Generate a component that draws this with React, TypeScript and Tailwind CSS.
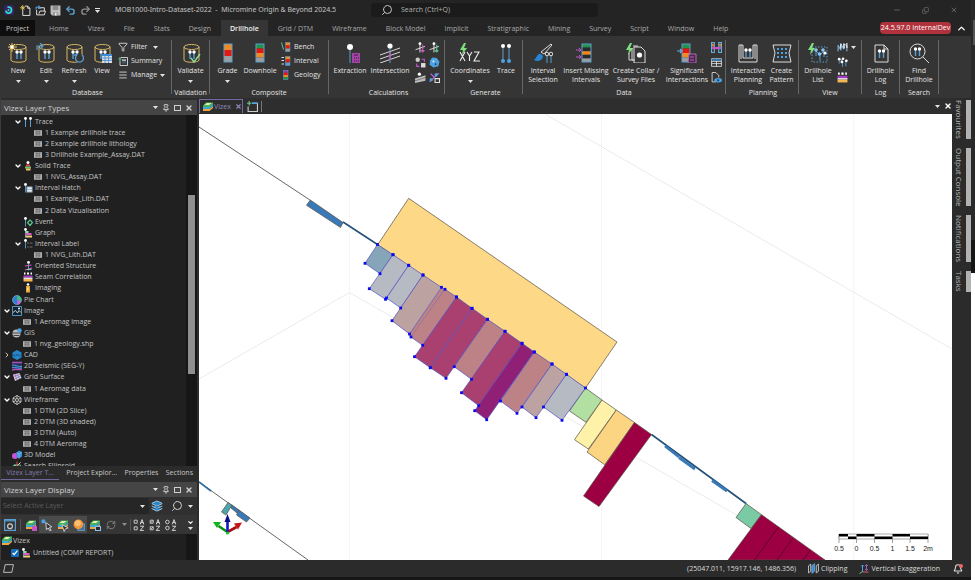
import type { ReactNode } from "react";
import { ChevronDown, ChevronRight, ChevronUp, Search, Pin, X, Minus, Copy, RefreshCw, Undo2, Redo2, Bell, Filter, Menu, Layers } from "lucide-react";

type Kids = { children?: ReactNode };

const Glyph = ({ children, cls = "h-5 w-5" }: Kids & { cls?: string }) => (
  <svg viewBox="0 0 20 20" className={"shrink-0 " + cls} fill="none" aria-hidden="true">
    {children}
  </svg>
);

const Arrow = () => (
  <svg viewBox="0 0 5 3" className="h-[3px] w-[5px] shrink-0" aria-hidden="true">
    <path d="M0 0h5L2.500 3z" fill="#e4e4e4" />
  </svg>
);

const Pins = ({ x = 0, y = 0 }: { x?: number; y?: number }) => (
  <g transform={`translate(${x} ${y})`}>
    <path d="M8 9v7M12 9v7" stroke="#5b9fd0" strokeWidth="1.400" />
    <circle cx="8" cy="9" r="1.700" fill="#fff" />
    <circle cx="12" cy="9" r="1.700" fill="#fff" />
  </g>
);

const Db = ({ children }: Kids) => (
  <Glyph>
    <ellipse cx="10.500" cy="4" rx="7.500" ry="2.500" stroke="#d9b865" />
    <path d="M3 4v13c0 3 15 3 15 0V4" stroke="#d9b865" />
    <Pins x={1} />
    {children}
  </Glyph>
);

const Bars = ({ colors, x = 6, w = 8 }: { colors: string[]; x?: number; w?: number }) => (
  <>
    {colors.map((c, i) => (
      <rect key={i} x={x} y={1 + (i * 18) / colors.length} width={w} height={18 / colors.length} fill={c} />
    ))}
    <rect x={x} y="1" width={w} height="18" stroke="#5b9fd0" />
  </>
);

function Big({ icon, lines, w, drop }: { icon: ReactNode; lines: string[]; w: string; drop?: boolean }) {
  return (
    <button className={"flex shrink-0 flex-col items-center pt-[3px] " + w}>
      {icon}
      <span className="mt-[3px] flex flex-col items-center leading-[9px]">
        {lines.map((l) => (
          <span key={l}>{l}</span>
        ))}
      </span>
      {drop && (
        <span className="mt-[5px]">
          <Arrow />
        </span>
      )}
    </button>
  );
}

function Small({ icon, label, drop }: { icon: ReactNode; label?: string; drop?: boolean }) {
  return (
    <button className="flex h-[14px] items-center gap-[3px]">
      {icon}
      {label && <span>{label}</span>}
      {drop && <Arrow />}
    </button>
  );
}

function Group({ name, w, children }: Kids & { name: string; w: string }) {
  return (
    <section aria-label={name} className={"flex shrink-0 flex-col py-1 " + w}>
      <div className="flex h-[54px] flex-col border-r border-[#666]">
        <div className="flex h-[48px] shrink-0 items-start">{children}</div>
        <h2 className="shrink-0 text-center leading-[10px]">{name}</h2>
      </div>
    </section>
  );
}

const sm = "h-[11px] w-[11px]";

const Well = ({ color }: { color: string }) => (
  <Glyph cls={sm}>
    <path d="M9 5v14M1 14l17-6" stroke="#dcdcdc" strokeWidth="1.800" />
    <circle cx="9" cy="3" r="2.600" fill="#fff" />
    <path d="M14 5v12M11 15l3 3 3-3" stroke={color} strokeWidth="2" />
  </Glyph>
);

const TABS = ["Home", "Vizex", "File", "Stats", "Design", "Drillhole", "Grid / DTM", "Wireframe", "Block Model", "Implicit", "Stratigraphic", "Mining", "Survey", "Script", "Window", "Help"];

function TitleBar() {
  return (
    <header className="flex h-5 shrink-0 items-center bg-[#242424] pl-1 text-[#c4c4c4]">
      <Glyph cls="h-[10px] w-[10px]">
        <rect width="20" height="20" rx="3" fill="#352064" />
        <path d="M7 4h2a6 6 0 010 12c-4 0-5-2-5-5" stroke="#30dbc9" strokeWidth="3.500" />
        <circle cx="9" cy="10" r="2" fill="#30dbc9" />
      </Glyph>
      <div className="ml-[6px] flex items-center gap-1">
        <button aria-label="New file">
          <Glyph cls="h-[11px] w-[11px]">
            <path d="M5 8v11h13V6l-4-4H9M14 2v4h4" stroke="#ddd" strokeWidth="1.800" />
            <path d="M5 0v9M0 5h9M2 2l6 6M8 2L2 8" stroke="#efc85a" strokeWidth="1.500" />
          </Glyph>
        </button>
        <button aria-label="Open">
          <Glyph cls="h-[11px] w-[11px]">
            <path d="M3 9v9h14l2-7H9l-2 5M9 7V5h8v6" stroke="#ddd" strokeWidth="1.800" />
            <path d="M2 8V4h7M6 1l3 3-3 3" stroke="#5b9fd0" strokeWidth="2" />
          </Glyph>
        </button>
        <button aria-label="Save">
          <Glyph cls="h-[11px] w-[11px]">
            <path d="M1 1h18v18H4l-3-3z" fill="#bcbcbc" />
            <path d="M5 2h10v7H5zM6 13h8v6H6z" fill="#8a8a8a" />
            <path d="M9 14h3v5H9z" fill="#eee" />
          </Glyph>
        </button>
        <button aria-label="Undo"><Undo2 className="h-[11px] w-[11px] text-[#5b9fd0]" strokeWidth={3} /></button>
        <button aria-label="Redo"><Redo2 className="h-[11px] w-[11px] text-[#8d8d8d]" strokeWidth={3} /></button>
        <button aria-label="Customize" className="flex flex-col items-center gap-px"><span className="h-px w-[5px] bg-[#e4e4e4]" /><Arrow /></button>
      </div>
      <span className="ml-[15px] w-[256px] font-['Noto_Sans'] whitespace-nowrap">MOB1000-Intro-Dataset-2022&nbsp; -&nbsp; Micromine Origin &amp; Beyond 2024.5</span>
      <label className="flex h-[14px] w-[227px] items-center gap-2 rounded-sm bg-[#1b1b1b] pl-[10px]">
        <Search className="h-3 w-3 -scale-x-100" strokeWidth={2} />
        <input aria-label="Search" placeholder="Search (Ctrl+Q)" className="w-40 bg-transparent outline-none placeholder:text-[#b4b4b4]" />
      </label>
      <div className="ml-auto flex items-center gap-[21px] pr-[13px] text-[#606060]">
        <button aria-label="Minimize"><Minus className="h-2 w-2" strokeWidth={3} /></button>
        <button aria-label="Restore"><Copy className="h-[7px] w-[7px] -scale-y-100" strokeWidth={3} /></button>
        <button aria-label="Close"><X className="h-2 w-2" strokeWidth={3} /></button>
      </div>
    </header>
  );
}

function TabBar() {
  return (
    <nav className="flex h-4 shrink-0 items-stretch bg-[#242424] text-[#a9a9a9]">
      <button className="mr-1 w-[35px] bg-[#0e0e0e] pt-px text-[#c8c8c8]">Project</button>
      {TABS.map((t) => (
        <button key={t} className={"ml-px px-[9px] pt-px " + (t === "Drillhole" ? "bg-[#353535] font-semibold text-[#f0f0f0]" : "")}>
          {t}
        </button>
      ))}
      <div className="ml-auto flex items-center gap-[5px] pr-1">
        <span className="flex h-3 w-[71px] items-center justify-center rounded-sm bg-[#b0323c] text-white">24.5.97.0 InternalDev</span>
        <button aria-label="Collapse ribbon"><ChevronUp className="h-[11px] w-[11px] text-white" strokeWidth={3} /></button>
      </div>
    </nav>
  );
}

const Bolt = () => <path d="M4 0L0 7h3l-1 5 5-7H4l2-5z" fill="#7de07d" />;

function Ribbon() {
  return (
    <div className="flex h-[62px] shrink-0 overflow-hidden bg-[#353535] text-[#e4e4e4]">
      <Group name="Database" w="w-[172px] pl-1">
        <Big w="w-7" drop lines={["New"]} icon={<Db><path d="M4 0v9M0 4h9M1 1l6 6M7 1L1 7" stroke="#efc85a" /><circle cx="4" cy="4" r="1.800" fill="#fff" /></Db>} />
        <Big w="w-7" drop lines={["Edit"]} icon={<Db><path d="M1 7V3h6M4 0l3 3-3 3" stroke="#5b9fd0" strokeWidth="1.200" /></Db>} />
        <Big w="w-7" drop lines={["Refresh"]} icon={<Db><circle cx="15.500" cy="15.500" r="4.500" fill="#353535" /><path d="M13 12a4 4 0 105 0M13 12v-2M13 12h-3" stroke="#5b9fd0" strokeWidth="1.300" /></Db>} />
        <Big w="w-7" lines={["View"]} icon={<Db><path d="M10 11h10v9H10z" fill="#dcdcdc" /><path d="M10 11h10v2H10z" fill="#3b8bd6" /><path d="M10 15h10M10 17.500h10M13 13v7M16.500 13v7" stroke="#3b8bd6" strokeWidth=".8" /></Db>} />
        <div className="ml-[2px] flex flex-col">
          <div className="flex items-center gap-[6px]"><Small icon={<Filter className="h-[10px] w-[10px]" strokeWidth={2} />} label="Filter" /><Arrow /></div>
          <Small label="Summary" icon={<Glyph cls="h-[10px] w-[10px]"><path d="M6 3h13v16H4V9" stroke="#ddd" strokeWidth="1.800" /><path d="M1 6h6M4 2v7" stroke="#5fc98d" strokeWidth="2" /><Pins x={2} y={-1} /></Glyph>} />
          <Small label="Manage" drop icon={<Menu className="h-[10px] w-[10px]" strokeWidth={2} />} />
        </div>
      </Group>
      <Group name="Validation" w="w-[38px]">
        <Big w="w-full" drop lines={["Validate"]} icon={<Db><path d="M10 15l3 4 6-8" stroke="#8be29b" strokeWidth="1.400" /></Db>} />
      </Group>
      <Group name="Composite" w="w-[119px]">
        <div className="flex pl-1">
          <Big w="w-[27px]" drop lines={["Grade"]} icon={<Glyph><Bars colors={["#f08a24", "#e01a12", "#9d9d9d"]} /></Glyph>} />
          <Big w="w-[38px]" lines={["Downhole"]} icon={<Glyph><Bars colors={["#23924b", "#e01a12", "#f08a24", "#9d9d9d"]} /></Glyph>} />
          <div className="ml-[2px]">
            <Small label="Bench" icon={<Glyph cls="h-[10px] w-[10px]"><path d="M1 1l4 14" stroke="#5fc98d" strokeWidth="2" /><Bars x={9} w={9} colors={["#f08a24", "#e01a12", "#9d9d9d"]} /></Glyph>} />
            <Small label="Interval" icon={<Glyph cls="h-[10px] w-[10px]"><path d="M1 3h5M1 9h5M1 16h5" stroke="#ddd" strokeWidth="2" /><Bars x={9} w={9} colors={["#f08a24", "#e01a12", "#5b9fd0"]} /></Glyph>} />
            <Small label="Geology" icon={<Glyph cls="h-[10px] w-[10px]"><Bars x={5} w={9} colors={["#9c38ad", "#e01a12", "#f08a24", "#23924b"]} /></Glyph>} />
          </div>
        </div>
      </Group>
      <Group name="Calculations" w="w-[116px] pl-1">
        <Big w="w-[34px]" lines={["Extraction"]} icon={<Glyph><path d="M10 5v15" stroke="#5b9fd0" /><circle cx="10" cy="4" r="3" fill="#fff" /><path d="M12 10h8v10h-8z" fill="#a444a4" /><path d="M14 12h4M14 15h1m1 0h1m1 0h1M14 18h1m1 0h1m1 0h1" stroke="#351e35" /></Glyph>} />
        <Big w="w-[46px]" lines={["Intersection"]} icon={<Glyph><path d="M0 12l20-7M0 16l20-7M0 20l20-7" stroke="#d8d8d8" /><path d="M10 5v15" stroke="#5b9fd0" /><path d="M10 9v8" stroke="#c454c8" strokeWidth="1.300" /><circle cx="10" cy="3" r="2.600" fill="#fff" /></Glyph>} />
        <div className="ml-[2px] grid grid-cols-2 gap-x-[3px] gap-y-px">
          <Small icon={<Well color="#d458c8" />} />
          <Small icon={<Well color="#5fc98d" />} />
          <Small icon={<Glyph cls={sm}><circle cx="5" cy="5" r="4" fill="#ccc" /><path d="M11 11h8v8h-8z" fill="#ddd" /><path d="M12 4h5v5M8 17H3v-5" stroke="#c454c8" strokeWidth="2" /></Glyph>} />
          <Small icon={<Glyph cls={sm}><path d="M6 1l8 1 5 6-2 9-9 2-7-5 1-8z" fill="#4da2df" /><circle cx="8" cy="8" r="2" fill="#b7e1ff" /><circle cx="12" cy="13" r="1.500" fill="#225" /></Glyph>} />
          <Small icon={<Glyph cls={sm}><path d="M0 12l19-6v10L0 20z" fill="#bbb" /><path d="M0 16l19-6" stroke="#444" /><circle cx="8" cy="4" r="3" fill="#fff" /></Glyph>} />
          <Small icon={<Glyph cls={sm}><path d="M1 18L18 2M3 3l7 7" stroke="#bd6de0" strokeWidth="2" /><circle cx="4" cy="14" r="3" fill="#4da2df" /><circle cx="13" cy="5" r="3" fill="#4da2df" /><path d="M11 12h8v7h-8z" stroke="#ddd" strokeWidth="2" /></Glyph>} />
        </div>
      </Group>
      <Group name="Generate" w="w-[78px] pl-1">
        <Big w="w-[42px]" drop lines={["Coordinates"]} icon={<Glyph cls="h-5 w-6"><Bolt /><path d="M0 9l5 9M5 9l-5 9M7 9l2.500 4v5M12 9l-2.500 4M14 9h5l-5 9h6" stroke="#eee" strokeWidth="1.100" /></Glyph>} />
        <Big w="w-[30px]" lines={["Trace"]} icon={<Glyph><path d="M7 4v14M13 4v14" stroke="#5b9fd0" /><circle cx="7" cy="3" r="2" fill="#fff" /><circle cx="13" cy="3" r="2" fill="#fff" /><circle cx="7" cy="18" r="2" fill="#4da2df" /><circle cx="13" cy="18" r="2" fill="#4da2df" /></Glyph>} />
      </Group>
      <Group name="Data" w="w-[203px]">
        <Big w="w-10" lines={["Interval", "Selection"]} icon={<Glyph><path d="M19 2l-8 9-3-2 10-8z" stroke="#ddd" /><path d="M8 11c-4-1-4 4-7 6 3 2 9 1 9-4z" fill="#2784d2" /><path d="M14 12v8M18 12v8" stroke="#5b9fd0" /><circle cx="14" cy="11" r="1.800" stroke="#ddd" /><circle cx="18" cy="11" r="1.800" stroke="#ddd" /></Glyph>} />
        <Big w="w-[46px]" lines={["Insert Missing", "Intervals"]} icon={<Glyph><Bars x={6} w={9} colors={["#23924b", "#2b2b2b", "#f08a24", "#2b2b2b", "#9d9d9d"]} /><path d="M0 7h5M3 5l2 2-2 2M0 14h5M3 12l2 2-2 2" stroke="#c454c8" /></Glyph>} />
        <Big w="w-[54px]" lines={["Create Collar /", "Survey Files"]} icon={<Glyph><Bolt /><path d="M3 10v7h4M7 3h5M6 5v12h3" stroke="#ddd" /><path d="M8 4h7l4 4v12H8z" stroke="#ddd" /><circle cx="13.500" cy="12" r="2.600" fill="#fff" /></Glyph>} />
        <Big w="w-12" lines={["Significant", "Intersections"]} icon={<Glyph><Bars x={5} w={8} colors={["#23924b", "#e01a12", "#f08a24", "#9d9d9d"]} /><path d="M0 8h5M3 6l2 2-2 2" stroke="#66b0e0" strokeWidth="1.200" /><path d="M12 11h7v9h-8z" fill="#4a284b" stroke="#b468b7" /><path d="M13 14h4M13 17h4" stroke="#b468b7" /></Glyph>} />
        <div className="flex flex-col gap-px">
          <Small icon={<Glyph cls={sm}><path d="M1 1h5v18H1zM14 1h5v18h-5z" stroke="#66b0e0" strokeWidth="2" /><path d="M2 3h3v5H2zM15 3h3v5h-3z" fill="#f08a24" /><path d="M2 9h16v4H2z" fill="#c454c8" /></Glyph>} />
          <Small icon={<Glyph cls={sm}><path d="M1 3h18v14H1zM1 8h18M1 12h18M10 3v14" stroke="#ddd" strokeWidth="1.600" /><path d="M1 3h18v4H1z" fill="#3976a8" /></Glyph>} />
          <Small icon={<Glyph cls={sm}><path d="M9 18H2V1h7l5 5v4" stroke="#ddd" strokeWidth="1.600" /><ellipse cx="13" cy="15" rx="7" ry="4" fill="#4da2df" /><circle cx="13" cy="15" r="2" fill="#183b66" /></Glyph>} />
        </div>
      </Group>
      <Group name="Planning" w="w-[73px] pl-[2px]">
        <Big w="w-10" lines={["Interactive", "Planning"]} icon={<Glyph><path d="M1 2h4v13h10V2h4v17H1zM3 2v14M17 2v14" stroke="#ddd" /><Pins y={-2} /></Glyph>} />
        <Big w="w-[27px]" lines={["Create", "Pattern"]} icon={<Glyph><path d="M1 2h18l-2 8 2 9H1l2-9z" stroke="#ddd" /><path d="M5 6h2m2 0h2m2 0h2M5 10h2m2 0h2m2 0h2M5 14h2m2 0h2m2 0h2" stroke="#4da2df" strokeWidth="2" /></Glyph>} />
      </Group>
      <Group name="View" w="w-[63px]">
        <Big w="w-[38px]" lines={["Drillhole", "List"]} icon={<Glyph><path d="M4 4h15v15H4z" stroke="#5b9fd0" strokeDasharray="1.500 1.500" /><Bolt /><path d="M8 8l4 4 4-4M12 12v6M8 9v4M16 9v5" stroke="#4da2df" /><circle cx="8" cy="7" r="1.800" fill="#8cc5ee" /><circle cx="15" cy="7" r="1.800" fill="#8cc5ee" /><circle cx="11.500" cy="11" r="1.800" fill="#8cc5ee" /><circle cx="17" cy="10" r="1.600" fill="#fff" /></Glyph>} />
        <div className="flex flex-col gap-px">
          <Small drop icon={<Glyph cls={sm}><path d="M2 17V6l5 9V3l5 10V3l6 4v10" stroke="#8cc5ee" strokeWidth="1.800" /><path d="M7 3v9M13 3v9M18 2v9" stroke="#fff" strokeWidth="2" /></Glyph>} />
          <Small icon={<Glyph cls={sm}><path d="M4 4v8M10 9v9M16 8v9M8 4v5" stroke="#5b9fd0" strokeWidth="1.600" /><circle cx="4" cy="4" r="2.500" fill="#fff" /><circle cx="9" cy="9" r="2.500" fill="#fff" /><circle cx="11" cy="3" r="2.300" fill="#fff" /><circle cx="17" cy="7" r="2.500" fill="#fff" /></Glyph>} />
          <Small icon={<SeamIcon />} />
        </div>
      </Group>
      <Group name="Log" w="w-[38px]">
        <Big w="w-full" lines={["Drillhole", "Log"]} icon={<Glyph><path d="M4 2h9l4 4v13H4z M13 2v4h4" stroke="#ddd" /><Pins x={0.5} y={-1} /></Glyph>} />
      </Group>
      <Group name="Search" w="w-[39px]">
        <Big w="w-full" lines={["Find", "Drillhole"]} icon={<Glyph><circle cx="8.500" cy="8.500" r="7.500" stroke="#ddd" /><path d="M14 14l6 6" stroke="#ddd" /><Pins x={-1.5} y={-3} /></Glyph>} />
      </Group>
    </div>
  );
}

const SeamIcon = ({ cls = "h-[11px] w-[11px]" }: { cls?: string }) => (
  <Glyph cls={cls}>
    <path d="M2 3h3m3 0h4m3 0h3" stroke="#fff" strokeWidth="4" />
    <path d="M1 7h18v4H1z" fill="#a23cc0" />
    <path d="M1 11h18v3H1z" fill="#ead9ef" />
    <path d="M1 14h18v5H1z" fill="#f2b84f" />
  </Glyph>
);

const VizexIcon = () => (
  <Glyph cls="h-[10px] w-[10px]">
    <path d="M0 14v4h13l7-6V8l-7 6z" fill="#f2a53b" />
    <path d="M0 10v4h13l7-6V4l-7 6z" fill="#3aa7d7" />
    <path d="M0 7l6-6h14v3l-7 6H0z" fill="#49b35d" />
    <path d="M3 6l5-4h9l-5 4z" fill="#dff0b0" />
  </Glyph>
);

function TreeIcon({ kind }: { kind: string }) {
  const stem = <><path d="M5 4v15" stroke="#5b9fd0" strokeWidth="1.800" /><circle cx="5" cy="3" r="2.800" fill="#fff" /></>;
  const art: Record<string, ReactNode> = {
    file: <><path d="M0 3h20v14H0z" fill="#b0b0b0" /><path d="M3 7h14M3 12h14M6 4v11M14 4v11M10 5v9" stroke="#606060" strokeWidth="1.400" /></>,
    trace: <><path d="M5 3v17M15 3v17" stroke="#5b9fd0" strokeWidth="2" /><circle cx="5" cy="3" r="2.800" fill="#fff" /><circle cx="15" cy="3" r="2.800" fill="#fff" /></>,
    solid: <><circle cx="10" cy="3" r="3" fill="#fff" /><path d="M6 7h8v4H6z" fill="#e24a4a" /><path d="M4 11h12v4H4z" fill="#6bbf73" /><path d="M6 15h9v4H6z" fill="#f2c063" /></>,
    hatch: <>{stem}<path d="M7 7h12v12H7z" fill="#9fb9c9" /><path d="M9 9h8v3H9zM9 14h8v3H9z" fill="#e8eef2" /></>,
    event: <>{stem}<path d="M14 6l5 5-5 6-5-6z" stroke="#5fc98d" strokeWidth="2.400" /></>,
    graph: <>{stem}<path d="M5 6h6v4H5z" fill="#8adf9c" /><path d="M5 10h12v4H5z" fill="#d85cc6" /><path d="M5 15h13v4H5z" fill="#f2d078" /></>,
    label: <>{stem}<path d="M8 8h4m2 0h5M8 16h3m2 0h6" stroke="#888" strokeWidth="1.500" /></>,
    orient: <><circle cx="11" cy="3" r="2.800" fill="#fff" /><path d="M11 5v14" stroke="#5b9fd0" strokeWidth="2" /><path d="M4 10l13-2M4 18l14-4" stroke="#c85cc8" strokeWidth="2.500" /><path d="M8 17h9" stroke="#6bd08a" strokeWidth="2" /></>,
    imaging: <><circle cx="10" cy="3" r="2.600" fill="#fff" /><path d="M6 6h8v13H6z" fill="#e9a338" /><path d="M8 9h3v6H8z" fill="#ffe3a2" /></>,
    pie: <><circle cx="10" cy="10" r="9" fill="#2c7fd0" stroke="#9ed0f5" /><path d="M10 10V1a9 9 0 018 12z" fill="#49b878" /><path d="M10 10l8 3a9 9 0 01-7 6z" fill="#d95bd0" /></>,
    image: <><path d="M1 1h18v18H1z" fill="#12232f" stroke="#5b9fd0" strokeWidth="1.800" /><path d="M2 13l5-4 4 5 3-5 4 4" stroke="#eee" strokeWidth="1.600" /><circle cx="14" cy="5" r="2" fill="#fff" /></>,
    gis: <><circle cx="9" cy="11" r="8" fill="#bdbdbd" /><path d="M1 10h16M3 15h12" stroke="#444" strokeWidth="2" /><circle cx="15" cy="5" r="4.500" fill="#4da2df" /></>,
    cad: <><path d="M10 0l9 5v10l-9 5-9-5V5z" fill="#2586c9" /><path d="M4 8v4h3M8 12l2-4 2 4M14 8v4h3" stroke="#12507e" strokeWidth="1.500" /></>,
    seismic: <><path d="M0 1h20v18H0z" fill="#27335e" /><path d="M0 3h20M0 18c8-3 12 0 20-1" stroke="#b04bb5" strokeWidth="3" /><path d="M0 8c8 0 12 4 20 3M0 13c7-2 12 3 20 1" stroke="#4da2df" strokeWidth="2" /></>,
    grid: <><path d="M2 5l13-3 4 10-13 6z" fill="#d7d4e8" /><path d="M6 4l4 13M10 3l5 11M2 9l14-4M5 14l13-6" stroke="#7a63a8" strokeWidth="1.200" /><circle cx="7" cy="8" r="1.500" fill="#df548d" /><circle cx="13" cy="10" r="1.500" fill="#4da2df" /></>,
    wire: <><path d="M10 1l8 5v8l-8 5-8-5V6zM10 1v18M2 6l16 8M18 6L2 14" stroke="#ddd" strokeWidth="1.600" /><circle cx="10" cy="10" r="3" fill="#222" stroke="#ddd" strokeWidth="1.500" /></>,
    model: <><circle cx="6" cy="12" r="6" fill="#c755d8" /><path d="M9 5l5-4 6 3v9l-6 4-5-3z" fill="#3991d8" /><path d="M9 5l5 3 6-4M14 8v9" stroke="#a9d5f5" /></>,
    ellip: <><path d="M3 17L17 3M4 8l12 6" stroke="#e6e6e6" strokeWidth="2" /><ellipse cx="10" cy="11" rx="9" ry="3.500" stroke="#5fc98d" strokeWidth="2" /><path d="M10 10V1" stroke="#e24a4a" strokeWidth="2" /></>,
  };
  if (kind === "seam") return <SeamIcon cls="h-[10px] w-[10px]" />;
  return <Glyph cls={kind === "file" ? "mr-px h-2 w-2" : "h-[10px] w-[10px]"}>{art[kind]}</Glyph>;
}

const TREE: [string, string, number, string?][] = [
  ["trace", "Trace", 1, "v"], ["file", "1 Example drillhole trace", 2], ["file", "2 Example drillhole lithology", 2], ["file", "3 Drillhole Example_Assay.DAT", 2],
  ["solid", "Solid Trace", 1, "v"], ["file", "1 NVG_Assay.DAT", 2], ["hatch", "Interval Hatch", 1, "v"], ["file", "1 Example_Lith.DAT", 2], ["file", "2 Data Vizualisation", 2],
  ["event", "Event", 1], ["graph", "Graph", 1], ["label", "Interval Label", 1, "v"], ["file", "1 NVG_Lith.DAT", 2], ["orient", "Oriented Structure", 1], ["seam", "Seam Correlation", 1], ["imaging", "Imaging", 1],
  ["pie", "Pie Chart", 0], ["image", "Image", 0, "v"], ["file", "1 Aeromag image", 1], ["gis", "GIS", 0, "v"], ["file", "1 nvg_geology.shp", 1], ["cad", "CAD", 0, ">"], ["seismic", "2D Seismic (SEG-Y)", 0],
  ["grid", "Grid Surface", 0, "v"], ["file", "1 Aeromag data", 1], ["wire", "Wireframe", 0, "v"], ["file", "1 DTM (2D Slice)", 1], ["file", "2 DTM (3D shaded)", 1], ["file", "3 DTM (Auto)", 1], ["file", "4 DTM Aeromag", 1],
  ["model", "3D Model", 0], ["ellip", "Search Ellipsoid", 0],
];
const INDENT = ["pl-[2px]", "pl-[13px]", "pl-[24px]"];

function PanelHead({ title }: { title: string }) {
  return (
    <div className="flex h-[15px] shrink-0 items-center bg-[#454545] pl-[3px] text-[#d0d0d0]">
      <h2 className="text-[8px]">{title}</h2>
      <div className="ml-auto flex items-center gap-1 pr-1">
        <button aria-label="Panel menu"><Arrow /></button>
        <button aria-label="Pin"><Pin className="h-2 w-2" strokeWidth={3} /></button>
        <button aria-label="Maximize" className="h-[6px] w-[7px] border border-[#d0d0d0]" />
        <button aria-label="Close panel"><X className="h-2 w-2" strokeWidth={4} /></button>
      </div>
    </div>
  );
}

function Tool({ label, on, children }: Kids & { label: string; on?: boolean }) {
  return (
    <button aria-label={label} className={"flex h-full w-4 items-center justify-center " + (on ? "bg-[#4b4b4b]" : "")}>
      {children}
    </button>
  );
}

const SortIcon = ({ kind }: { kind: number }) => (
  <Glyph cls="h-3 w-3">
    {kind < 2 ? <path d="M2 2h5v5H2zM2 13h5v5H2z" stroke="#ccc" strokeWidth="1.600" /> : <><circle cx="4" cy="5" r="3" stroke="#ccc" strokeWidth="1.600" /><circle cx="4" cy="15" r="3" stroke="#ccc" strokeWidth="1.600" /></>}
    {kind === 1 && <path d="M2 7l5-5M2 18l5-5" stroke="#ccc" strokeWidth="1.500" />}
    <path d="M12 9l3-8 3 8M13 6h4M12 12h6l-6 7h6" stroke="#ddd" strokeWidth="1.600" />
  </Glyph>
);

function LeftPanel() {
  return (
    <aside className="flex w-[197px] shrink-0 flex-col overflow-hidden border-l border-[#3c3c3c] bg-[#2c2c2c]">
      <div className="h-[2px] shrink-0" />
      <PanelHead title="Vizex Layer Types" />
      <div className="flex min-h-0 flex-1 overflow-hidden bg-[#202020]">
        <ul className="mt-px grid h-[356px] flex-1 auto-rows-fr text-[#c4c4c4]">
          {TREE.map(([kind, text, depth, state]) => (
            <li key={text} className={"flex min-h-0 items-center gap-[2px] whitespace-nowrap " + INDENT[depth]}>
              <span className="flex w-[7px] shrink-0 justify-center">
                {state === "v" && <ChevronDown className="h-2 w-2 shrink-0 text-white" strokeWidth={4} />}
                {state === ">" && <ChevronRight className="h-2 w-2 shrink-0" strokeWidth={3} />}
              </span>
              <TreeIcon kind={kind} />
              <span>{text}</span>
            </li>
          ))}
        </ul>
        <div className="w-[11px] shrink-0 bg-[#161616] px-[2px] pt-20">
          <div className="h-[179px] bg-[#8f8f8f]" />
        </div>
      </div>
      <div className="flex h-[14px] shrink-0 justify-between bg-[#2b2b2b] pr-1 text-[#c6c6c6]">
        <button className="w-[58px] border-b border-[#70689a] text-[#8279aa]">Vizex Layer T...</button>
        <button>Project Explor...</button>
        <button>Properties</button>
        <button>Sections</button>
      </div>
      <div className="h-[2px] shrink-0" />
      <PanelHead title="Vizex Layer Display" />
      <div className="flex h-[18px] shrink-0 items-center bg-[#303030]">
        <label className="relative flex h-4 w-[148px] items-center bg-[#262626]">
          <select aria-label="Active layer" className="h-full w-full appearance-none bg-transparent pl-[2px] text-[#5c5c5c]"><option>Select Active Layer</option></select>
          <span className="absolute right-1"><Arrow /></span>
        </label>
        <button aria-label="Layers" className="ml-[2px]"><Layers className="h-3 w-3 text-[#bfe2fa]" fill="#2d83c4" strokeWidth={1.5} /></button>
        <button aria-label="Find layer" className="ml-2"><Search className="h-3 w-3 -scale-x-100 text-[#cfcfcf]" strokeWidth={2} /></button>
        <span className="ml-[5px]"><Arrow /></span>
      </div>
      <div className="flex h-[19px] shrink-0 items-center bg-[#353535] py-px pl-px">
        <Tool label="View"><Glyph cls="h-3 w-3"><path d="M1 1h18v18H1z" stroke="#5b9fd0" strokeWidth="2" /><path d="M1 3h18" stroke="#5b9fd0" strokeWidth="2" /><circle cx="10" cy="12" r="4" stroke="#ccc" strokeWidth="2" /></Glyph></Tool>
        <span className="mx-[2px] h-3 w-px bg-[#555]" />
        <Tool label="Lock layer"><span className="relative"><VizexIcon /><span className="absolute -right-px -bottom-px h-[5px] w-[5px] bg-[#c454c8]" /></span></Tool>
        <Tool label="Select point" on><Glyph cls="h-3 w-3"><circle cx="4" cy="4" r="3.500" fill="#4da2df" /><path d="M8 6l10 7-4 1 3 5-2 1-3-5-3 3z" fill="#353535" stroke="#ddd" strokeWidth="1.500" /></Glyph></Tool>
        <Tool label="Select layer" on><span className="relative"><VizexIcon /><Glyph cls="absolute -right-px -bottom-[2px] h-2 w-2"><path d="M2 1l16 9-7 2-3 7z" fill="#353535" stroke="#ddd" strokeWidth="2" /></Glyph></span></Tool>
        <Tool label="Blend" on><Glyph cls="h-3 w-3"><path d="M8 8h11v11H8z" fill="#386ea0" stroke="#8cc5ee" /><circle cx="9" cy="9" r="8" fill="#f0983b" /><circle cx="8" cy="7" r="5" fill="#ffbd72" /></Glyph></Tool>
        <Tool label="Save layers"><span className="relative"><VizexIcon /><span className="absolute -right-px -bottom-px h-[5px] w-[6px] border border-[#8cc5ee] bg-[#2c2c2c]" /></span></Tool>
        <Tool label="Refresh"><RefreshCw className="h-[10px] w-[10px] text-[#8b8b8b]" /></Tool>
        <span className="mx-[3px] opacity-50"><Arrow /></span>
        <span className="h-3 w-px bg-[#555]" />
        <Tool label="Sort unticked"><SortIcon kind={0} /></Tool>
        <Tool label="Sort ticked"><SortIcon kind={1} /></Tool>
        <Tool label="Sort visible"><SortIcon kind={2} /></Tool>
        <button aria-label="More tools" className="mr-[3px] ml-auto flex flex-col items-center gap-px"><ChevronDown className="h-[7px] w-[7px] text-white" strokeWidth={4} /><Arrow /></button>
      </div>
      <div className="flex h-[26px] shrink-0 justify-between bg-[#202020] text-[#c4c4c4]">
        <div className="flex flex-col">
          <div className="flex h-[13px] items-center gap-px pl-px"><VizexIcon /><span>Vizex</span></div>
          <label className="flex h-3 items-center gap-[2px] pl-[10px]">
            <input type="checkbox" defaultChecked className="m-0 h-2 w-2 accent-[#0f6cbd]" />
            <TreeIcon kind="graph" />
            <span>Untitled (COMP REPORT)</span>
          </label>
        </div>
        <div className="w-[11px] bg-[#161616]" />
      </div>
    </aside>
  );
}

const BLOCKS: [string, string][] = [
  ["#86a5b8", "377.5,244.5 393,254.7 380,273.7 365,263.3"],
  ["#b6bac3", "393,254.7 408.7,265.3 385.5,299.3 369.3,288.7"],
  ["#b6bac3", "408.7,265.3 423,275 400.7,308 386.5,298"],
  ["#bda2a2", "423,275 441.5,287.3 409.5,334 392,320.7"],
  ["#bd8286", "445,289.3 456.5,297 422.7,345.3 411,337"],
  ["#a94070", "456.5,297 472,308.3 430.3,367.7 414.5,356.7"],
  ["#a94070", "472,308.3 487.5,319.3 446,378.3 430.3,367.7"],
  ["#bd8286", "487.5,319.3 505,331.3 471.5,379.3 454.3,366.7"],
  ["#a94070", "505,331.3 522,343.3 478.7,405.7 461.5,392.7"],
  ["#8f2076", "522,343.3 534.3,352 486.7,419.7 474.7,410.7"],
  ["#bd8286", "534.3,352 552,364 517,413.3 500.5,401"],
  ["#bda2a2", "552,364 566.5,374.3 536,417.7 522,407"],
  ["#b6bac3", "566.5,374.3 585.5,388 562,420.3 543.5,407"],
];
const OTHER: [string, string][] = [
  ["#fcd887", "408.7,198.3 617,342 585.5,388 377.7,244.7"],
  ["#3a79b7", "310.3,200 343,222.5 340.5,227.5 306.5,205.3"],
  ["#b1e0a2", "585.5,388 602,400 586,422.3 569.5,411"],
  ["#fdf2a8", "602,400 616.3,410 588.3,449 574.5,439.7"],
  ["#fcd583", "616.3,410 634.5,422.5 604.7,464.7 587,452"],
  ["#9c0042", "634.5,422.5 651.5,434.5 599,506.5 583.5,496"],
  ["#7acba5", "746,503.5 761.5,514.7 751,528.5 736,517.5"],
  ["#9c0042", "761.5,514.7 825,560 728,560"],
  ["#3a79b7", "232,505 239,510 237,513 231,508"],
  ["#3a79b7", "239,510 250,518 246.500,522 236.500,515"],
  ["#4aa5ad", "228,502.500 232,505 226,515 221.500,512"],
];

function Drawing() {
  const scale = [839, 856.5, 874.5, 892.5, 910, 928];
  return (
    <svg viewBox="199 114 753 446" preserveAspectRatio="xMinYMin slice" className="block h-full w-full" role="img" aria-label="Drillhole cross section">
      <g stroke="#e3e3e3" strokeWidth=".7" fill="none">
        <path d="M349.500 114v446M601.500 114v446M853.700 114v446" strokeDasharray="1 1" />
        <path d="M199 379L349.500 292.500 740 517M545 114L952 349" />
      </g>
      <path d="M199 127L310 200M199 482L308 560" stroke="#555" strokeWidth=".9" />
      <path d="M199 482l12 9" stroke="#2f6b9f" strokeWidth="1.600" />
      <path d="M343 222l34.500 22.500M651.500 434.500L746 503.500" stroke="#255078" strokeWidth="1.600" />
      <path d="M665 446l14 11M679 457.500l16 11.500M712 480.500l15 10.500" stroke="#3a79b7" strokeWidth="2.800" />
      {OTHER.map(([fill, points]) => (
        <polygon key={points} points={points} fill={fill} stroke="#574f45" strokeWidth=".7" />
      ))}
      <path d="M778.500 527L754.500 560M793 538L777 560M810.500 550L803 560" stroke="#4a0020" strokeWidth=".7" />
      <polygon points="441.5,287.3 445,289.3 411,337 408.5,335" fill="#bd8286" />
      {BLOCKS.map(([fill, points]) => (
        <polygon key={points} points={points} fill={fill} stroke="#5250c0" strokeWidth=".7" />
      ))}
      <path d="M441.500 287.300l3.500 3-34 47" stroke="#bd8286" fill="none" />
      {BLOCKS.flatMap(([, points]) => points.split(" ")).map((p, i) => {
        const [x, y] = p.split(",").map(Number);
        return <rect key={i} x={x - 1.4} y={y - 1.4} width="2.800" height="2.800" fill="#0b0bf0" />;
      })}
      <g strokeWidth="2.600">
        <path d="M227.500 532l-9-6" stroke="#0a8f12" /><path d="M213 522l8 0-4 6z" fill="#0db51a" />
        <path d="M227.500 532l9-5" stroke="#a80c10" /><path d="M242 522.500l-8 1 4 6z" fill="#c41418" />
        <path d="M227.500 532v-11" stroke="#1414c8" /><path d="M227.500 514l3 8h-6z" fill="#0b0b90" />
        <circle cx="227.500" cy="533" r="1.600" fill="#14c81e" />
      </g>
      {scale.map((x, i) => (
        <g key={x}>
          <path d={`M${x} 534v9`} stroke="#888" strokeWidth=".8" />
          <text x={x} y="551" textAnchor="middle" fontSize="7" fill="#222" fontFamily="Liberation Sans, sans-serif">{["0.5", "0", "0.5", "1", "1.5", "2m"][i]}</text>
        </g>
      ))}
      <path d="M839 534h89v5h-89z" fill="#fff" stroke="#777" strokeWidth=".6" />
      <path d="M839 535.200h9M856.500 535.200h18M892.500 535.200h17.500M848 537.800h8.500M874.500 537.800h18M910 537.800h18" stroke="#000" strokeWidth="2.400" />
    </svg>
  );
}

function Workspace() {
  return (
    <main className="ml-[2px] flex min-w-0 flex-1 flex-col">
      <div className="flex h-4 shrink-0 items-end bg-[#2e2e2e] pb-px">
        <button className="flex h-[14px] w-[44px] items-center gap-px border-x border-t border-[#756ba6] pl-[3px] text-[#8f86bb]">
          <VizexIcon /><span>Vizex</span><X className="ml-auto h-[7px] w-[7px] shrink-0" strokeWidth={4} />
        </button>
        <button aria-label="New view" className="ml-1 flex h-[14px] items-center">
          <Glyph cls="h-[11px] w-[11px]"><path d="M9 4h10v15H2v-9" stroke="#ccc" strokeWidth="2" /><path d="M9 4h10" stroke="#4da2df" strokeWidth="3" /><path d="M4 0v8M0 4h8" stroke="#6bd08a" strokeWidth="2" /></Glyph>
        </button>
        <span className="mb-px ml-[3px] h-[11px] w-px bg-[#777]" />
        <div className="ml-auto flex h-[14px] items-center gap-1">
          <button aria-label="View list"><Arrow /></button>
          <button aria-label="Close view"><X className="h-2 w-2 text-white" strokeWidth={4} /></button>
        </div>
      </div>
      <div className="min-h-0 flex-1 overflow-hidden bg-white"><Drawing /></div>
    </main>
  );
}

function Rail() {
  return (
    <nav aria-label="Docked panels" className="flex w-[19px] shrink-0 flex-col items-end gap-[9px] bg-[#2b2b2b] pt-[2px] text-[8px] text-[#b9b9b9]">
      {["Favourites", "Output Console", "Notifications", "Tasks"].map((t) => (
        <button key={t} className="border-r-[5px] border-[#b2b2b2] py-px pr-[2px] leading-[10px] [writing-mode:vertical-rl]">{t}</button>
      ))}
    </nav>
  );
}

function StatusBar() {
  return (
    <footer className="flex h-[17px] shrink-0 items-center bg-[#2b2b2b] pl-[3px] text-[#dcdcdc]">
      <Glyph cls="h-[11px] w-[11px]"><path d="M4 3h15l-3 14H1z" stroke="#ccc" strokeWidth="1.600" /></Glyph>
      <div className="ml-auto flex items-center pr-2">
        <span>(25047.011, 15917.146, 1486.356)</span>
        <button className="ml-3 flex items-center gap-[2px]">
          <Glyph cls="h-[11px] w-[11px]"><path d="M1 5l4-3v13l-4 3zM15 5l4-3v13l-4 3z" stroke="#ddd" strokeWidth="1.500" /><path d="M7 5l5-4v14l-5 4z" fill="#3b8bd6" stroke="#8cc5ee" /></Glyph>
          Clipping
        </button>
        <button className="ml-3 flex items-center gap-[2px]">
          <Glyph cls="h-[10px] w-[10px]"><path d="M7 16V2M4 5l3-3 3 3" stroke="#4da2df" strokeWidth="2" /><path d="M7 15l-6 4" stroke="#5fc98d" strokeWidth="2" /><path d="M7 16h12" stroke="#e25c6b" strokeWidth="2" /><path d="M15 2v10M12 4l3-3 3 3M12 10l3 3 3-3" stroke="#b468d7" strokeWidth="1.600" /></Glyph>
          Vertical Exaggeration
        </button>
        <button aria-label="Notifications" className="relative ml-[13px]"><Bell className="h-[10px] w-[10px]" strokeWidth={2.5} /><span className="absolute top-0 right-0 h-1 w-1 rounded-full bg-[#f26464]" /></button>
      </div>
    </footer>
  );
}

export default function App() {
  return (
    <div className="flex h-screen overflow-hidden bg-white font-['Open_Sans','Noto_Sans',sans-serif] text-[7px] leading-[10px]">
      <div className="flex min-w-0 flex-1 flex-col bg-[#2c2c2c]">
        <TitleBar />
        <TabBar />
        <Ribbon />
        <div className="flex min-h-0 flex-1 bg-[#2c2c2c]">
          <LeftPanel />
          <Workspace />
          <Rail />
        </div>
        <StatusBar />
        <div className="h-[3px] shrink-0 bg-[#161616]" />
      </div>
      <div className="flex w-1 shrink-0 flex-col">
        <div className="h-60 bg-[#292929] pt-5 pl-[2px]"><div className="h-[25px] bg-[#555]" /></div>
        <div className="h-[33px] bg-[#151515]" />
      </div>
    </div>
  );
}
